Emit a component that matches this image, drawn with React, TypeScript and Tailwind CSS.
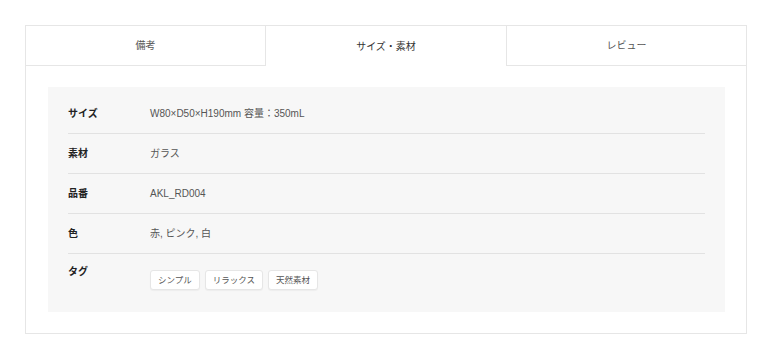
const rows = [
  { label: 'サイズ', value: 'W80×D50×H190mm 容量：350mL' },
  { label: '素材', value: 'ガラス' },
  { label: '品番', value: 'AKL_RD004' },
  { label: '色', value: '赤, ピンク, 白' },
];

const tags = ['シンプル', 'リラックス', '天然素材'];

export default function App() {
  return (
    <div
      className="min-h-[358px] bg-white pt-[25px] pl-[25px]"
      style={{ fontFamily: '"Liberation Sans", "Noto Sans CJK JP", sans-serif' }}
    >
      <div className="w-[722px] border border-[#e6e6e6]">
        {/* Tabs */}
        <div className="grid grid-cols-3 h-[40px] text-[10px] text-[#555]">
          <div className="flex items-center justify-center border-r border-b border-[#e6e6e6]">備考</div>
          <div className="flex items-center justify-center text-[#333]">サイズ・素材</div>
          <div className="flex items-center justify-center border-l border-b border-[#e6e6e6]">レビュー</div>
        </div>

        {/* Panel */}
        <div className="pl-[22px] pr-[21px] pt-[21px] pb-[21px]">
          <div className="bg-[#f7f7f7] px-5 pt-[7px] pb-[22px]">
            {rows.map((r) => (
              <div key={r.label} className="flex items-center h-[40px] border-b border-[#e2e2e2]">
                <div className="w-[82px] text-[10px] font-bold text-[#222]">{r.label}</div>
                <div className="text-[10px] text-[#555]">{r.value}</div>
              </div>
            ))}
            <div className="flex items-start">
              <div className="w-[82px] pt-[10px] text-[10px] leading-4 font-bold text-[#222]">タグ</div>
              <div className="flex gap-[5px] pt-[16px]">
                {tags.map((t) => (
                  <span
                    key={t}
                    className="h-[20px] px-[7px] flex items-center bg-white border border-[#e6e6e6] rounded-[3px] shadow-[0_1px_1px_rgba(0,0,0,0.04)] text-[8.5px] text-[#555]"
                  >
                    {t}
                  </span>
                ))}
              </div>
            </div>
          </div>
        </div>
      </div>
    </div>
  );
}
